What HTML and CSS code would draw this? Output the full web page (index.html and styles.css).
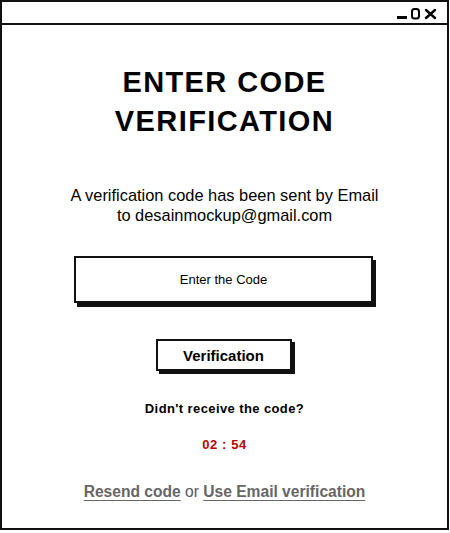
FILE: index.html
```html
<!DOCTYPE html>
<html>
<head>
<meta charset="utf-8">
<link rel="stylesheet" href="styles.css">
</head>
<body>
<div class="window">
  <div class="titlebar">
    <svg class="controls" width="44" height="14" viewBox="0 0 44 14">
      <rect x="0" y="8" width="10" height="3" fill="#000"/>
      <rect x="15" y="1" width="7" height="9.5" rx="2.5" fill="none" stroke="#000" stroke-width="2"/>
      <path d="M29 2 L38 10 M38 2 L29 10" stroke="#000" stroke-width="2.4" stroke-linecap="round"/>
    </svg>
  </div>
  <div class="content">
    <h1 class="title">ENTER CODE<br>VERIFICATION</h1>
    <p class="subtitle">A verification code has been sent by Email<br>to desainmockup@gmail.com</p>
    <div class="input">Enter the Code</div>
    <div class="button">Verification</div>
    <p class="question">Didn't receive the code?</p>
    <p class="timer">02 : 54</p>
    <p class="links"><span class="link">Resend code</span> or <span class="link">Use Email verification</span></p>
  </div>
</div>
</body>
</html>
```
FILE: styles.css
```css
html, body {
  margin: 0;
  padding: 0;
  background: #fff;
}
body {
  font-family: "Liberation Sans", Arial, sans-serif;
  color: #000;
}
.window {
  box-sizing: border-box;
  width: 449px;
  height: 530px;
  border: 2px solid #111;
  display: flex;
  flex-direction: column;
}
.titlebar {
  height: 21px;
  border-bottom: 2px solid #111;
  display: flex;
  justify-content: flex-end;
  align-items: flex-start;
  padding-right: 6px;
}
.controls {
  margin-top: 6px;
}
.content {
  display: flex;
  flex-direction: column;
  align-items: center;
  text-align: center;
}
.title {
  margin: 38px 0 0;
  font-size: 29px;
  line-height: 39px;
  font-weight: bold;
  letter-spacing: 1.4px;
}
.subtitle {
  margin: 44px 0 0;
  font-size: 16.4px;
  line-height: 20px;
}
.input {
  box-sizing: border-box;
  margin-top: 31px;
  margin-left: -2px;
  width: 299px;
  height: 47px;
  border: 2px solid #111;
  box-shadow: 3px 4px 0 #111;
  font-size: 13px;
  display: flex;
  align-items: center;
  justify-content: center;
}
.button {
  box-sizing: border-box;
  margin-top: 36px;
  margin-left: -2px;
  width: 136px;
  height: 32px;
  border: 2px solid #111;
  box-shadow: 3px 3px 0 #111;
  font-size: 15px;
  font-weight: bold;
  display: flex;
  align-items: center;
  justify-content: center;
}
.question {
  margin: 29px 0 0;
  font-size: 13px;
  line-height: 18px;
  font-weight: bold;
  letter-spacing: 0.4px;
}
.timer {
  margin: 18px 0 0;
  font-size: 13px;
  line-height: 18px;
  font-weight: bold;
  color: #c00000;
  letter-spacing: 0.6px;
}
.links {
  margin: 28px 0 0;
  font-size: 15.6px;
  line-height: 20px;
  color: #555;
}
.link {
  font-weight: bold;
  color: #666;
  text-decoration: underline;
  text-underline-offset: 3px;
}
```
